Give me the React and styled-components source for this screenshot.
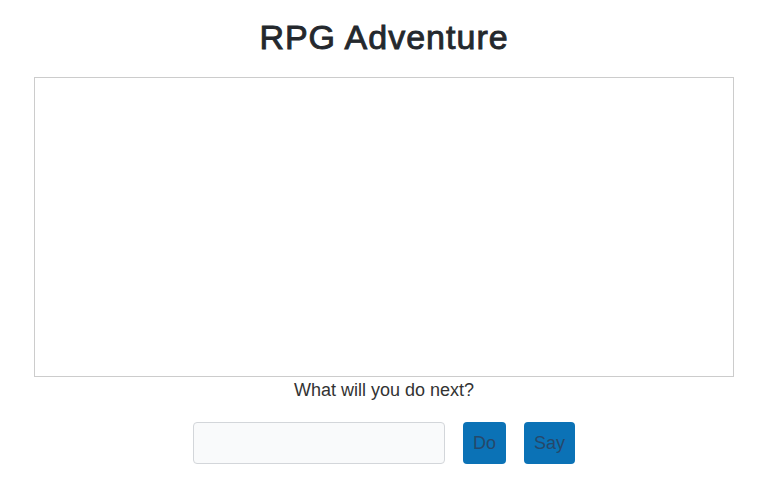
import React, { useState } from "react";
import styled, { createGlobalStyle } from "styled-components";

const GlobalStyle = createGlobalStyle`
  html, body {
    margin: 0;
    padding: 0;
    background: #ffffff;
  }
  body {
    font-family: "Liberation Sans", Arial, Helvetica, sans-serif;
    color: #333333;
  }
`;

const Page = styled.main`
  display: flex;
  flex-direction: column;
  align-items: center;
  padding: 16px 34px 16px;
`;

const Title = styled.h1`
  margin: 0 0 18px;
  font-size: 34px;
  font-weight: 500;
  line-height: 43px;
  letter-spacing: 1px;
  color: #24282d;
  -webkit-text-stroke: 0.9px #24282d;
`;

const Story = styled.div`
  box-sizing: border-box;
  width: 700px;
  height: 300px;
  border: 1px solid #cccccc;
  background: #ffffff;
  overflow-y: auto;
`;

const Prompt = styled.p`
  margin: 0;
  font-size: 18px;
  line-height: 27px;
  color: #333333;
`;

const Controls = styled.form`
  display: flex;
  align-items: center;
  gap: 18px;
  margin-top: 18px;
`;

const CommandInput = styled.input`
  box-sizing: border-box;
  width: 252px;
  height: 42px;
  padding: 6px 12px;
  border: 1px solid #d3d6da;
  border-radius: 4px;
  background: #f9fafb;
  font-family: inherit;
  font-size: 18px;
  color: #333333;
  outline: none;
`;

const ActionButton = styled.button`
  box-sizing: border-box;
  height: 42px;
  padding: 0 10px;
  border: none;
  border-radius: 4px;
  background: #0b72b6;
  font-family: inherit;
  font-size: 18px;
  color: #25486a;
  cursor: pointer;
`;

export default function App() {
  const [command, setCommand] = useState("");

  return (
    <>
      <GlobalStyle />
      <Page>
        <Title>RPG Adventure</Title>
        <Story />
        <Prompt>What will you do next?</Prompt>
        <Controls onSubmit={(e) => e.preventDefault()}>
          <CommandInput
            value={command}
            onChange={(e) => setCommand(e.target.value)}
          />
          <ActionButton type="submit">Do</ActionButton>
          <ActionButton type="button">Say</ActionButton>
        </Controls>
      </Page>
    </>
  );
}
